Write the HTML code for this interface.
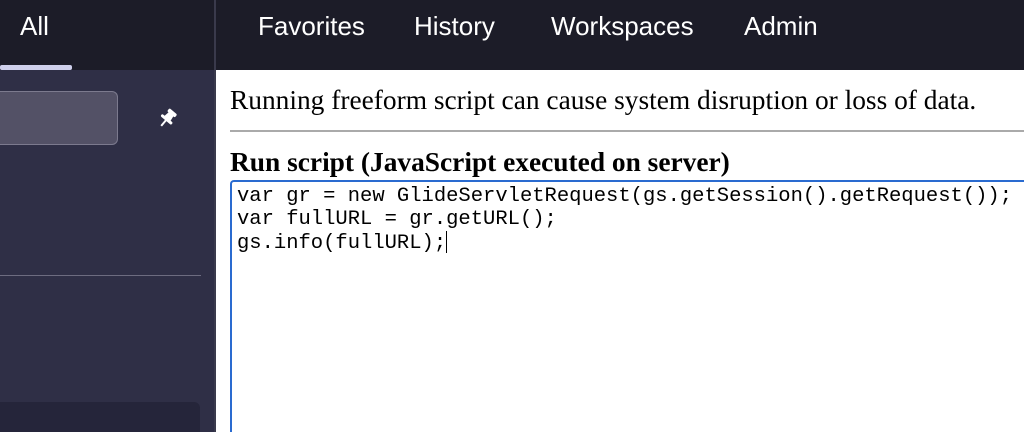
<!DOCTYPE html>
<html><head><style>
*{margin:0;padding:0;box-sizing:border-box}
html,body{width:1024px;height:432px;overflow:hidden}
body{background:#fff;position:relative;font-family:"Liberation Sans",sans-serif}
.top{position:absolute;left:0;top:0;width:1024px;height:70px;background:#1c1c28}
.nav{position:absolute;top:10px;color:#fff;font-size:26px;line-height:32px}
.ul{position:absolute;left:0;top:65px;width:72px;height:5px;background:#cfd0ec;border-radius:2px}
.vdiv{position:absolute;left:214px;top:0;width:2px;height:432px;background:#3a3a4c}
.side{position:absolute;left:0;top:70px;width:214px;height:362px;background:#2f2f46}
.search{position:absolute;left:0;top:91px;width:118px;height:54px;background:#535166;border:1px solid #7c7a8e;border-left:none;border-radius:0 6px 6px 0}
.line{position:absolute;left:0;top:275px;width:201px;height:1px;background:#6d6c80}
.bot{position:absolute;left:0;top:402px;width:200px;height:30px;background:#25253a;border-radius:0 6px 0 0}
.main{position:absolute;left:216px;top:70px;width:808px;height:362px;background:#fff;font-family:"Liberation Serif",serif;color:#000;overflow:hidden}
.warn{position:absolute;left:14px;top:14px;font-size:27.4px;line-height:32px;white-space:nowrap}
.hr{position:absolute;left:14px;top:60px;width:794px;height:2px;background:#aaa}
.h{position:absolute;left:14px;top:76px;font-size:27.4px;line-height:32px;font-weight:bold;white-space:nowrap}
.ta{position:absolute;left:14px;top:110px;width:800px;height:252px;border:2px solid #2a6bd0;border-bottom:none;border-radius:4px 4px 0 0;font-family:"Liberation Mono",monospace;font-size:20.5px;line-height:22.5px;padding:4px 0 0 5px;white-space:pre;overflow:hidden}
.cur{display:inline-block;width:1px;height:22px;background:#000;vertical-align:-5px}
</style></head><body>
<div class="top"></div>
<div class="nav" style="left:20px">All</div>
<div class="nav" style="left:258px">Favorites</div>
<div class="nav" style="left:414px">History</div>
<div class="nav" style="left:551px">Workspaces</div>
<div class="nav" style="left:744px">Admin</div>
<div class="ul"></div>
<div class="side"></div>
<div class="search"></div>
<svg style="position:absolute;left:154px;top:106px" width="26" height="26" viewBox="0 0 26 26"><g fill="#fff" transform="rotate(40 13 13)"><rect x="8" y="3" width="10" height="4" rx="1.5"/><path d="M10 6h6l1 7h-8z"/><rect x="6" y="12" width="14" height="3" rx="1.5"/><rect x="12" y="14" width="2" height="8"/></g></svg>
<div class="line"></div>
<div class="bot"></div>
<div class="vdiv"></div>
<div class="main">
<div class="warn">Running freeform script can cause system disruption or loss of data.</div>
<div class="hr"></div>
<div class="h">Run script (JavaScript executed on server)</div>
<div class="ta">var gr = new GlideServletRequest(gs.getSession().getRequest());
var fullURL = gr.getURL();
gs.info(fullURL);<span class="cur"></span></div>
</div>
</body></html>
